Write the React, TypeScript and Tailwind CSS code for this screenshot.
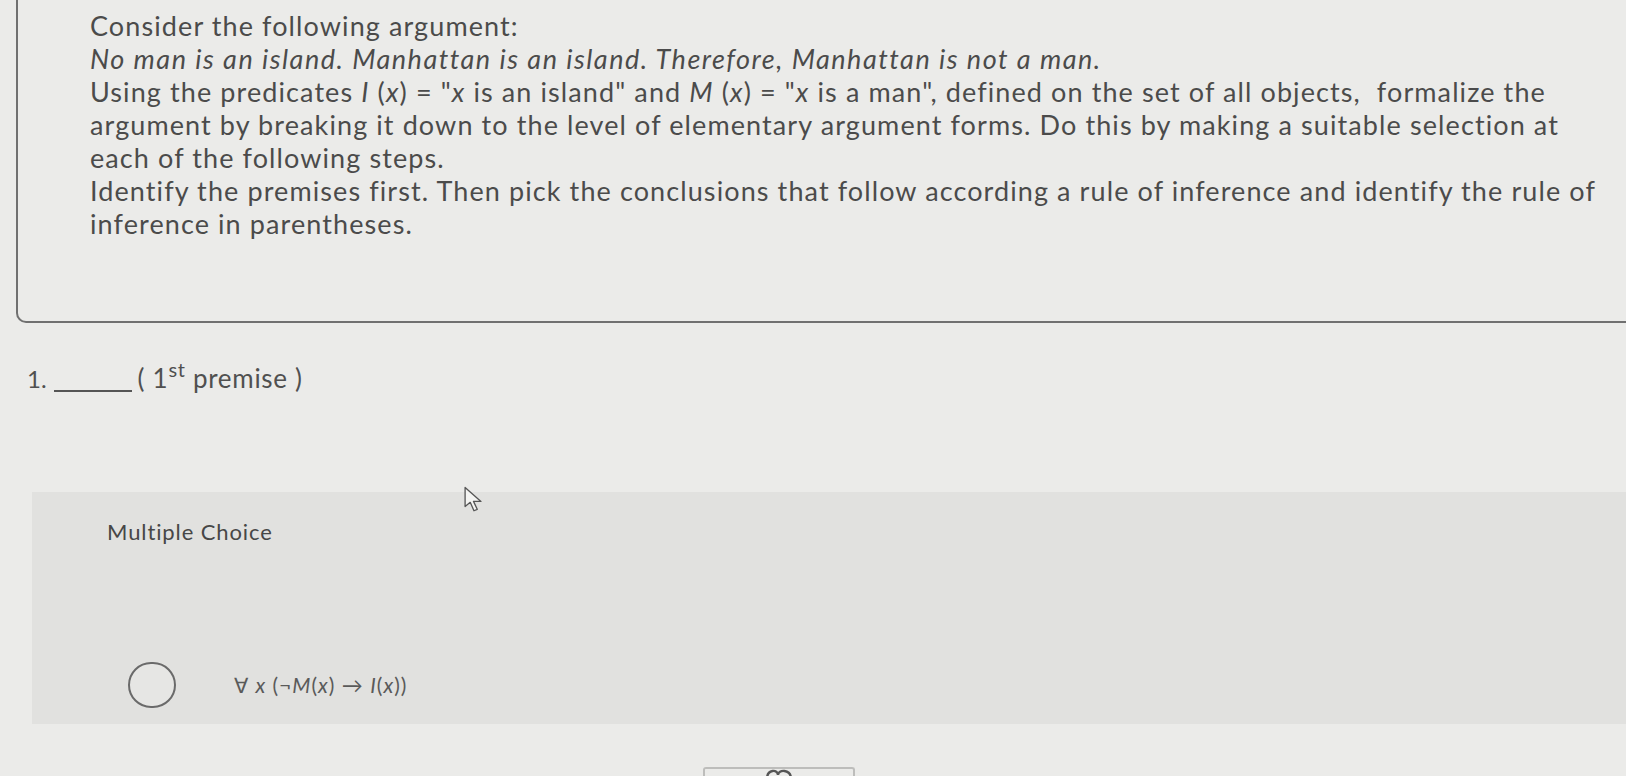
import React from 'react'

// Problem prompt lines, broken the way the screenshot breaks them.
const PROMPT: React.ReactNode[] = [
  'Consider the following argument:',
  <i key="i" className="tracking-[1.5px]">No man is an island. Manhattan is an island. Therefore, Manhattan is not a man.</i>,
  <>
    Using the predicates <i>I</i> (<i>x</i>) = "<i>x</i> is an island" and <i>M</i> (<i>x</i>) = "<i>x</i> is a man", defined on the set of all objects,&nbsp; formalize the
  </>,
  'argument by breaking it down to the level of elementary argument forms. Do this by making a suitable selection at',
  'each of the following steps.',
  'Identify the premises first. Then pick the conclusions that follow according a rule of inference and identify the rule of',
  'inference in parentheses.',
]

function Cursor() {
  return (
    <svg width="21" height="28" viewBox="0 0 22 30" fill="#f4f4f2" stroke="#555" strokeWidth="1.4" strokeLinejoin="round">
      <path d="M2 1.5 L2 22 L7.5 17.5 L11.5 26.5 L15 25 L11 16.5 L19 16.5 Z" />
    </svg>
  )
}

export default function App() {
  return (
    <div
      className="relative w-[1626px] h-[776px] overflow-hidden bg-[#ebebe9] text-[#4b4b4b]"
      style={{ fontFamily: 'Lato, "Open Sans", sans-serif' }}
    >
      {/* prompt box: only left + bottom edges visible */}
      <div className="ml-[16px] mr-[-40px] h-[323px] border-l-2 border-b-2 border-[#707070] rounded-bl-[10px] pt-[9px] pl-[72px] text-[27px] leading-[33px] tracking-[1.1px]">
        {PROMPT.map((line, i) => (
          <div key={i} className="whitespace-nowrap">{line}</div>
        ))}
      </div>

      {/* question 1 */}
      <div className="mt-[40px] pl-[27px] flex items-baseline text-[26px] leading-[30px] text-[#505050]">
        <span className="text-[24px]">1.</span>
        <span className="ml-[7px] w-[78px] border-b-2 border-[#555] self-end mb-[2px]" />
        <span className="ml-[6px] tracking-[0.7px]">( 1<sup className="text-[20px] -top-[0.55em]">st</sup> premise )</span>
      </div>

      {/* multiple choice panel */}
      <div className="mt-[98px] ml-[32px] h-[232px] bg-[#e1e1df] pl-[75px] pt-[27px]">
        <div className="text-[22px] leading-[26px] tracking-[0.9px] text-[#474747]">Multiple Choice</div>
        <div className="mt-[117px] ml-[21px] flex items-center">
          <span className="w-[48px] h-[46px] rounded-full border-2 border-[#6a6a6a] bg-[#e6e6e4]" />
          <span className="ml-[58px] text-[21px] tracking-[1px] text-[#5a5a5a] whitespace-nowrap">
            ∀ <i>x</i> (¬<i>M</i>(<i>x</i>) → <i>I</i>(<i>x</i>))
          </span>
        </div>
      </div>

      {/* cut-off control at the bottom edge */}
      <div className="mt-[43px] ml-[703px] w-[152px] h-[20px] border-t-2 border-x-2 border-[#bdbdbb] rounded-t-[3px] flex justify-center">
        <svg width="32" height="14" viewBox="0 0 32 14" fill="none" stroke="#555" strokeWidth="2.4" className="-mt-[4px]">
          <path d="M4 14 C4 4 15 4 15 10 C15 4 28 4 28 14" />
        </svg>
      </div>

      {/* mouse pointer overlay */}
      <div className="absolute left-[463px] top-[486px]">
        <Cursor />
      </div>
    </div>
  )
}
